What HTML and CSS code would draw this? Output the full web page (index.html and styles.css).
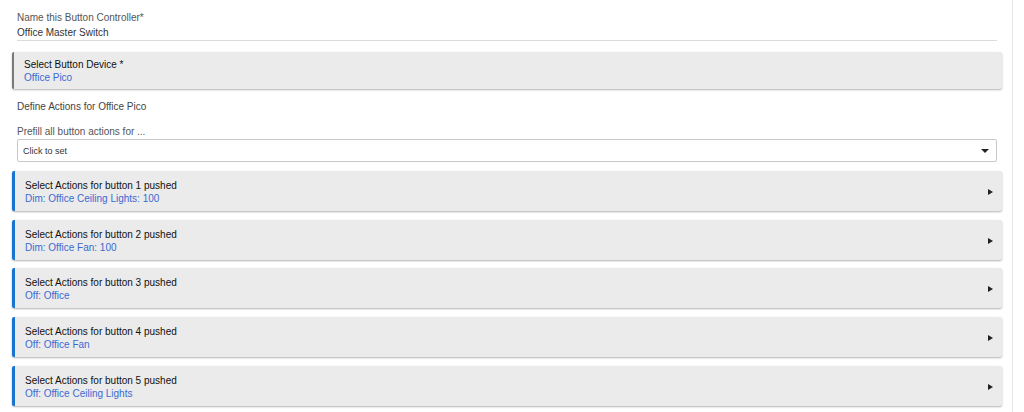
FILE: index.html
```html
<!DOCTYPE html>
<html lang="en">
<head>
    <meta charset="utf-8">
    <meta name="viewport" content="width=device-width, initial-scale=1.0">
    <title>Button Controller</title>
    <link rel="stylesheet" href="styles.css">
</head>
<body>
    <div id="page">
        <div class="text-field">
            <div class="field-label">Name this Button Controller*</div>
            <div class="field-value">Office Master Switch</div>
        </div>

        <div class="card device-card">
            <div class="card-title">Select Button Device *</div>
            <div class="card-value">Office Pico</div>
        </div>

        <div class="section-label">Define Actions for Office Pico</div>

        <div class="select-block">
            <div class="field-label">Prefill all button actions for ...</div>
            <div class="select-box">
                <span>Click to set</span>
                <span class="caret"></span>
            </div>
        </div>

        <div class="card action-card">
            <div class="card-text">
                <div class="card-title">Select Actions for button 1 pushed</div>
                <div class="card-value">Dim: Office Ceiling Lights: 100</div>
            </div>
            <span class="arrow"></span>
        </div>
        <div class="card action-card">
            <div class="card-text">
                <div class="card-title">Select Actions for button 2 pushed</div>
                <div class="card-value">Dim: Office Fan: 100</div>
            </div>
            <span class="arrow"></span>
        </div>
        <div class="card action-card">
            <div class="card-text">
                <div class="card-title">Select Actions for button 3 pushed</div>
                <div class="card-value">Off: Office</div>
            </div>
            <span class="arrow"></span>
        </div>
        <div class="card action-card">
            <div class="card-text">
                <div class="card-title">Select Actions for button 4 pushed</div>
                <div class="card-value">Off: Office Fan</div>
            </div>
            <span class="arrow"></span>
        </div>
        <div class="card action-card">
            <div class="card-text">
                <div class="card-title">Select Actions for button 5 pushed</div>
                <div class="card-value">Off: Office Ceiling Lights</div>
            </div>
            <span class="arrow"></span>
        </div>
    </div>
</body>
</html>
```

FILE: styles.css
```css
body {
    font-family: "Liberation Sans", Arial, sans-serif;
    font-size: 10px;
    margin: 0;
    padding: 0;
    background-color: #fff;
    color: #222;
}

#page {
    box-sizing: border-box;
    width: 1013px;
    height: 412px;
    padding: 0 10px 0 12px;
    border-right: 1px solid #e6e6e6;
}

.text-field {
    margin: 0 5px;
    padding-top: 11px;
    border-bottom: 1px solid #dcdcdc;
}

.field-label {
    line-height: 14px;
    color: #555;
}

.field-value {
    line-height: 15px;
    color: #333;
}

.card {
    background-color: #ebebeb;
    border-radius: 2px;
    box-shadow: 0 1px 2px rgba(0, 0, 0, 0.3);
}

.card-title {
    line-height: 13px;
    color: #111;
}

.card-value {
    line-height: 13px;
    color: #3a6ad2;
}

.device-card {
    margin-top: 11px;
    height: 26px;
    padding: 6px 0 5px 10px;
    border-left: 2px solid #7a7a7a;
}

.section-label {
    margin: 10px 5px 0;
    line-height: 15px;
    color: #444;
}

.select-block {
    margin: 11px 5px 0;
}

.select-box {
    display: flex;
    align-items: center;
    justify-content: space-between;
    height: 21px;
    padding: 0 5px;
    border: 1px solid #c8c8c8;
    border-radius: 2px;
    font-size: 9px;
    color: #333;
}

.caret {
    width: 0;
    height: 0;
    margin-right: 2px;
    border-left: 4px solid transparent;
    border-right: 4px solid transparent;
    border-top: 4px solid #222;
}

.action-card {
    display: flex;
    align-items: center;
    justify-content: space-between;
    height: 26px;
    margin-top: 8.7px;
    padding: 8px 9px 6px 10px;
    border-left: 3px solid #1a74cf;
}

.select-block + .action-card {
    margin-top: 9px;
}

.arrow {
    width: 0;
    height: 0;
    border-top: 3px solid transparent;
    border-bottom: 3px solid transparent;
    border-left: 5px solid #222;
}
```
